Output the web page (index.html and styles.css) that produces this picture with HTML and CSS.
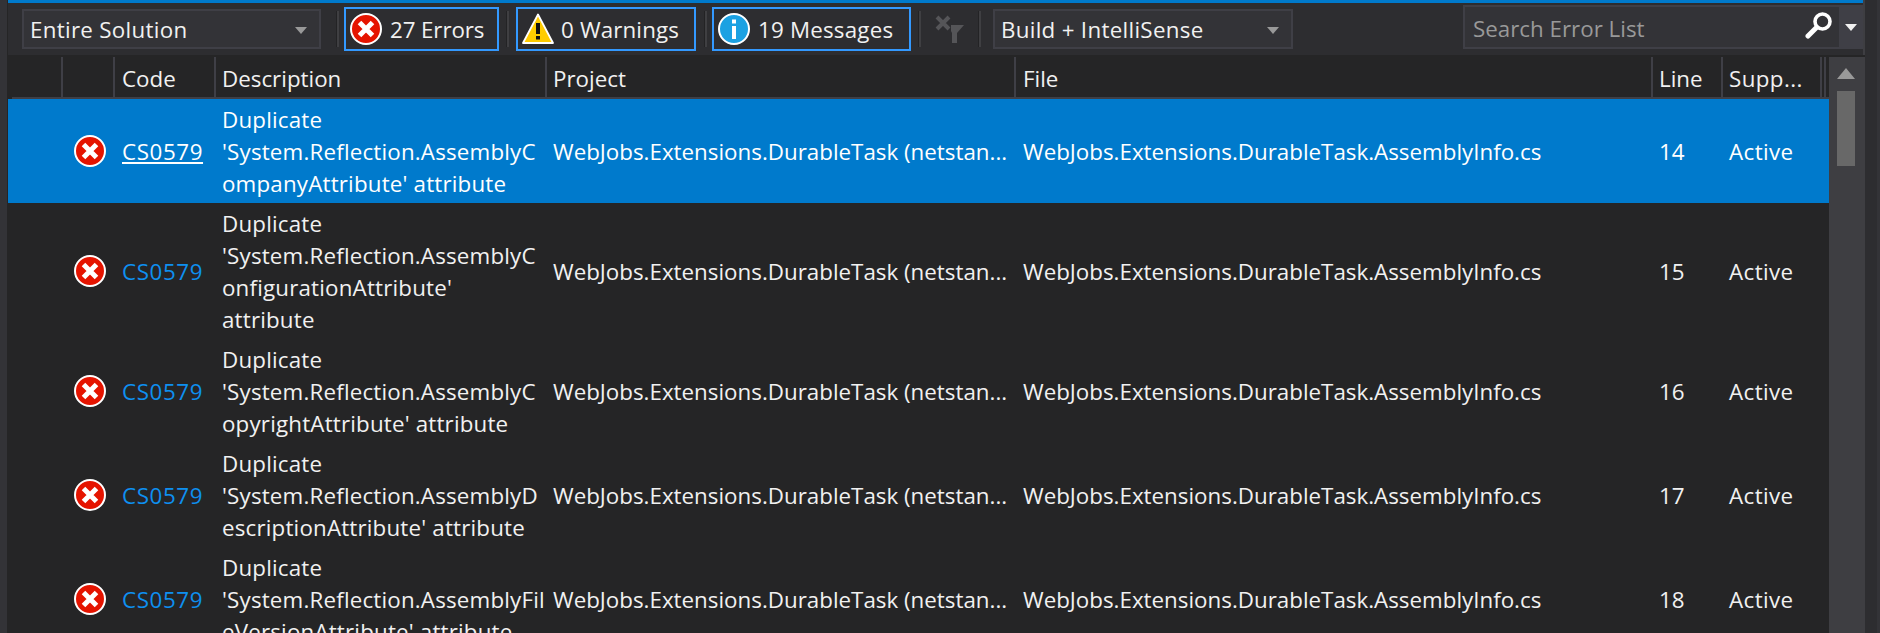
FILE: index.html
```html
<!DOCTYPE html>
<html lang="en">
<head>
<meta charset="utf-8">
<title>Error List</title>
<link rel="stylesheet" href="styles.css">
</head>
<body>
<svg class="defs" aria-hidden="true">
  <symbol id="err" viewBox="0 0 32 32">
    <circle cx="16" cy="16" r="15" fill="#e51400" stroke="#fff" stroke-width="2"/>
    <path d="M9.500 9.500 22.500 22.500M22.500 9.500 9.500 22.500" stroke="#fff" stroke-width="5" fill="none"/>
  </symbol>
</svg>
<div class="app">
  <div class="strip-left"></div>
  <div class="main">
    <div class="topbar"></div>
    <div class="toolbar">
      <div class="combo combo-scope"><span>Entire Solution</span><i class="caret"></i></div>
      <div class="sep sep-1"></div>
      <div class="toggle toggle-err"><svg class="ticon"><use href="#err"/></svg><span>27 Errors</span></div>
      <div class="sep sep-2"></div>
      <div class="toggle toggle-warn">
        <svg class="ticon" viewBox="0 0 32 32"><path d="M16 1.500 31 30H1z" fill="#fc0" stroke="#fff" stroke-width="1.800" stroke-linejoin="round"/><path d="M14 10h4v11h-4zM14 23h4v3.600h-4z" fill="#111"/></svg>
        <span>0 Warnings</span></div>
      <div class="sep sep-3"></div>
      <div class="toggle toggle-info">
        <svg class="ticon" viewBox="0 0 32 32"><circle cx="16" cy="16" r="15" fill="#1ba1e2" stroke="#fff" stroke-width="2"/><path d="M14 13h4v13h-4zM14 6.500h4v4h-4z" fill="#fff"/></svg>
        <span>19 Messages</span></div>
      <div class="sep sep-4"></div>
      <svg class="filter" viewBox="0 0 32 32"><path d="M3 4 15 16M15 4 3 16" stroke="#555558" stroke-width="4" fill="none"/><path d="M17 12H30L23 20V30H18V20L17 18z" fill="#555558"/></svg>
      <div class="sep sep-5"></div>
      <div class="combo combo-build"><span>Build + IntelliSense</span><i class="caret"></i></div>
      <div class="searchwrap">
        <div class="search">
          <span class="placeholder">Search Error List</span>
          <svg class="lens" viewBox="0 0 28 28"><circle cx="17.500" cy="10.500" r="7.500" fill="none" stroke="#fff" stroke-width="3.600"/><path d="M11.500 16.500 3 25" stroke="#fff" stroke-width="5" stroke-linecap="round"/></svg>
        </div>
        <div class="search-drop"><i class="caret caret-search"></i></div>
      </div>
    </div>
    <div class="content">
      <div class="list">
        <div class="row head">
          <div class="cell"></div><div class="cell div"></div>
          <div class="cell div">Code</div><div class="cell div">Description</div>
          <div class="cell div">Project</div><div class="cell div">File</div>
          <div class="cell div">Line</div><div class="cell div">Supp...</div><div class="cell div end"></div>
        </div>
        <div class="row sel">
          <div class="cell"></div><div class="icell"><svg class="ricon"><use href="#err"/></svg></div>
          <div class="cell"><a class="code">CS0579</a></div>
          <div class="cell desc">Duplicate<br>'System.Reflection.AssemblyC<br>ompanyAttribute' attribute</div>
          <div class="cell">WebJobs.Extensions.DurableTask (netstan...</div>
          <div class="cell">WebJobs.Extensions.DurableTask.AssemblyInfo.cs</div>
          <div class="cell">14</div><div class="cell">Active</div><div class="cell"></div>
        </div>
        <div class="row">
          <div class="cell"></div><div class="icell"><svg class="ricon"><use href="#err"/></svg></div>
          <div class="cell"><a class="code">CS0579</a></div>
          <div class="cell desc">Duplicate<br>'System.Reflection.AssemblyC<br>onfigurationAttribute'<br>attribute</div>
          <div class="cell">WebJobs.Extensions.DurableTask (netstan...</div>
          <div class="cell">WebJobs.Extensions.DurableTask.AssemblyInfo.cs</div>
          <div class="cell">15</div><div class="cell">Active</div><div class="cell"></div>
        </div>
        <div class="row">
          <div class="cell"></div><div class="icell"><svg class="ricon"><use href="#err"/></svg></div>
          <div class="cell"><a class="code">CS0579</a></div>
          <div class="cell desc">Duplicate<br>'System.Reflection.AssemblyC<br>opyrightAttribute' attribute</div>
          <div class="cell">WebJobs.Extensions.DurableTask (netstan...</div>
          <div class="cell">WebJobs.Extensions.DurableTask.AssemblyInfo.cs</div>
          <div class="cell">16</div><div class="cell">Active</div><div class="cell"></div>
        </div>
        <div class="row">
          <div class="cell"></div><div class="icell"><svg class="ricon"><use href="#err"/></svg></div>
          <div class="cell"><a class="code">CS0579</a></div>
          <div class="cell desc">Duplicate<br>'System.Reflection.AssemblyD<br>escriptionAttribute' attribute</div>
          <div class="cell">WebJobs.Extensions.DurableTask (netstan...</div>
          <div class="cell">WebJobs.Extensions.DurableTask.AssemblyInfo.cs</div>
          <div class="cell">17</div><div class="cell">Active</div><div class="cell"></div>
        </div>
        <div class="row">
          <div class="cell"></div><div class="icell"><svg class="ricon"><use href="#err"/></svg></div>
          <div class="cell"><a class="code">CS0579</a></div>
          <div class="cell desc">Duplicate<br>'System.Reflection.AssemblyFil<br>eVersionAttribute' attribute</div>
          <div class="cell">WebJobs.Extensions.DurableTask (netstan...</div>
          <div class="cell">WebJobs.Extensions.DurableTask.AssemblyInfo.cs</div>
          <div class="cell">18</div><div class="cell">Active</div><div class="cell"></div>
        </div>
      </div>
      <div class="scrollbar">
        <i class="sb-up"></i>
        <div class="thumb"></div>
      </div>
    </div>
  </div>
  <div class="strip-right"></div>
</div>
</body>
</html>
```
FILE: styles.css
```css
html, body {
  margin: 0;
  height: 100%;
  overflow: hidden;
  background: #252526;
}
body {
  font-family: "Open Sans", "Noto Sans", sans-serif;
  font-size: 22.35px;
  line-height: 32px;
  color: #f1f1f1;
}
.defs { display: none; }
.app { display: flex; height: 633px; overflow: hidden; }
.strip-left { width: 8px; flex: none; background: #333337; border-right: 1px solid #252526; box-sizing: border-box; }
.strip-right { width: 15px; flex: none; background: #2d2d30; border-right: 3px solid #333337; box-sizing: border-box; }
.main { flex: 1; min-width: 0; display: flex; flex-direction: column; background: #3e3e42; }
.topbar { height: 3px; background: #007acc; flex: none; margin-right: 2px; }
.toolbar { height: 52px; flex: none; background: #2d2d30; display: flex; align-items: center; padding-left: 14px; box-sizing: border-box; margin-right: 2px; }
.combo { height: 40px; box-sizing: border-box; background: #333337; border: 2px solid #3f3f46; display: flex; align-items: center; justify-content: space-between; padding: 2px 12px 0 6px; letter-spacing: 0.3px; }
.combo-scope { width: 299px; }
.combo-build { width: 300px; }
.caret { width: 0; height: 0; border-left: 6px solid transparent; border-right: 6px solid transparent; border-top: 7px solid #999; }
.sep { width: 3px; height: 36px; box-sizing: border-box; background: #3f3f42; border-left: 1px solid #232325; flex: none; }
.sep-1 { margin: 0 5px 0 15px; }
.sep-2 { margin: 0 7px; }
.sep-3 { margin: 0 5px 0 8px; }
.sep-4 { margin: 0 7px; }
.sep-5 { margin: 0 12px; }
.toggle { height: 44px; box-sizing: border-box; border: 2px solid #3399ff; display: flex; align-items: center; padding-left: 4px; gap: 8px; }
.toggle span { padding-top: 2px; }
.toggle-err { width: 155px; letter-spacing: -0.1px; }
.toggle-warn { width: 180px; letter-spacing: 0.15px; gap: 7px; }
.toggle-info { width: 199px; letter-spacing: 0.2px; }
.ticon { width: 32px; height: 32px; flex: none; }
.filter { width: 32px; height: 32px; margin-left: 6px; flex: none; }
.searchwrap { margin-left: auto; display: flex; align-self: flex-start; margin-top: 2px; height: 44px; }
.search { width: 376px; box-sizing: border-box; background: #333337; border: 2px solid #3f3f46; border-right: 0; display: flex; align-items: center; justify-content: space-between; padding: 4px 6px 0 8px; }
.placeholder { color: #999; }
.lens { width: 28px; height: 28px; margin-top: -8px; }
.search-drop { width: 24px; background: #3f3f46; display: flex; justify-content: center; padding-top: 19px; box-sizing: border-box; }
.caret-search { border-top-color: #f1f1f1; }
.content { flex: 1; min-height: 0; display: flex; background: #252526; }
.list { flex: 1; min-width: 0; background: #252526; }
.row { display: grid; grid-template-columns: 53px 52px 101px 331px 469px 637px 70px 99px 9px; align-items: center; padding: 3px 0; }
.cell { padding: 2px 0 0 8px; white-space: nowrap; overflow: hidden; box-sizing: border-box; }
.row .cell:nth-child(3) { padding-left: 9px; }
.row .cell:nth-child(6) { padding-left: 9px; }
.row .cell:nth-child(8) { letter-spacing: 0.4px; }
.head { padding: 2px 0 0; margin-left: 4px; grid-template-columns: 49px 52px 101px 331px 469px 637px 70px 99px 9px; height: 44px; box-sizing: border-box; border-bottom: 2px solid #3f3f46; align-items: stretch; line-height: 44px; }
.head .div { border-left: 2px solid #3f3f46; padding: 0 0 0 6px; }
.head .div:nth-child(3) { padding-left: 7px; }
.head .div:nth-child(6) { padding-left: 7px; }
.head .end { border-right: 2px solid #3f3f46; width: 6px; padding: 0; }
.sel { background: #007acc; color: #fff; }
.icell { display: flex; }
.ricon { width: 32px; height: 32px; display: block; margin-left: 13px; }
.code { color: #0e90f0; letter-spacing: 0.6px; }
.sel .code { color: #fff; text-decoration: underline; }
.desc { letter-spacing: 0.18px; }
.scrollbar { width: 36px; flex: none; margin-top: 2px; background: #3e3e42; display: flex; flex-direction: column; align-items: center; padding: 11px 2px 0 0; box-sizing: border-box; }
.sb-up { width: 0; height: 0; border-left: 9px solid transparent; border-right: 9px solid transparent; border-bottom: 11px solid #999; }
.thumb { width: 18px; height: 75px; background: #686868; margin-top: 12px; }
```
